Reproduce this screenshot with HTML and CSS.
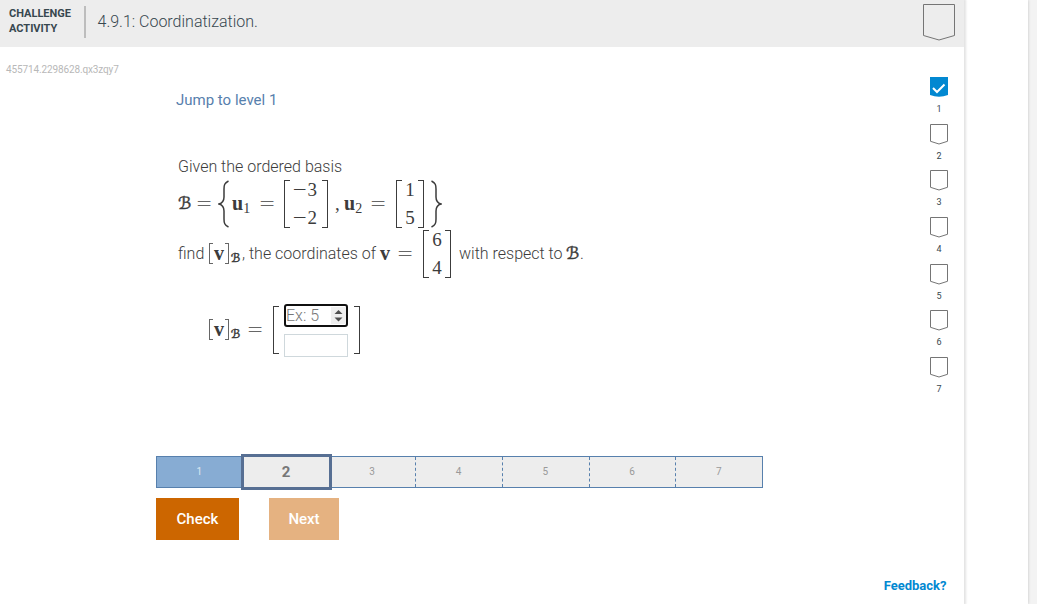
FILE: index.html
```html
<!DOCTYPE html>
<html lang="en">
<head>
<meta charset="utf-8">
<title>4.9.1: Coordinatization.</title>
<link rel="stylesheet" href="styles.css">
</head>
<body>
<div class="page">
  <main class="card">
    <header class="header">
      <div class="kind">CHALLENGE<br>ACTIVITY</div>
      <h1 class="title">4.9.1: Coordinatization.</h1>
      <svg class="header-badge" width="34" height="38" viewBox="0 0 34 38"><path d="M1.5 1.5H32.5V32.5L17 37L1.5 32.5Z"/></svg>
    </header>
    <div class="body">
      <section class="content">
        <div class="code">455714.2298628.qx3zqy7</div>
        <a class="jump">Jump to level 1</a>
        <div class="question">
          <p class="given">Given the ordered basis</p>
          <div class="math row-basis">
            <span class="cal">ℬ</span><span class="eq eq-a">=</span>
            <svg class="brace brace-l" width="12" height="48" viewBox="0 0 12 48"><path d="M10.5 1C6.5 3 6 5 6 9V17C6 21 4.500 23 1 24C4.500 25 6 27 6 31V39C6 43 6.500 45 10.500 47"/></svg>
            <span class="vec u">u<sub>1</sub></span><span class="eq eq-b">=</span>
            <span class="matrix wide"><span><i class="minus">−</i>3</span><span><i class="minus">−</i>2</span></span>
            <span class="comma">,</span>
            <span class="vec u">u<sub>2</sub></span><span class="eq eq-c">=</span>
            <span class="matrix narrow m-b"><span>1</span><span>5</span></span>
            <svg class="brace brace-r" width="12" height="48" viewBox="0 0 12 48"><path d="M1.500 1C5.500 3 6 5 6 9V17C6 21 7.500 23 11 24C7.500 25 6 27 6 31V39C6 43 5.500 45 1.500 47"/></svg>
          </div>
          <div class="math row-find">
            <span class="txt find">find</span>
            <span class="norm"><span class="vec">v</span></span><span class="cal cal-sub">ℬ</span>
            <span class="txt coords">, the coordinates of</span>
            <span class="vec v">v</span><span class="eq eq-d">=</span>
            <span class="matrix narrow m-c"><span>6</span><span>4</span></span>
            <span class="txt respect">with respect to</span>
            <span class="cal cal-end">ℬ</span><span class="txt">.</span>
          </div>
          <div class="math row-answer">
            <span class="norm norm-a"><span class="vec">v</span></span><span class="cal cal-sub">ℬ</span>
            <span class="eq eq-e">=</span>
            <span class="bracket bracket-l"></span>
            <div class="inputs">
              <div class="input focused"><span>Ex: 5</span>
                <i class="spin"><svg width="15" height="17" viewBox="0 0 15 17"><path d="M3.500 7L7.500 3L11.500 7ZM3.500 10.500L7.500 14.500L11.500 10.500Z"/></svg></i>
              </div>
              <div class="input"></div>
            </div>
            <span class="bracket bracket-r"></span>
          </div>
        </div>
        <div class="progress">
          <div class="step done">1</div>
          <div class="step current">2</div>
          <div class="step">3</div>
          <div class="step">4</div>
          <div class="step">5</div>
          <div class="step">6</div>
          <div class="step">7</div>
        </div>
        <div class="buttons">
          <button class="btn check">Check</button>
          <button class="btn next">Next</button>
        </div>
      </section>
      <aside class="levels">
        <div class="level on"><svg width="20" height="22" viewBox="0 0 20 22"><path class="fill" d="M1 1H19V19Q10 22.500 1 19Z"/><path class="tick" d="M4 12L8 16L15.500 8.500"/></svg><span>1</span></div>
        <div class="level"><svg width="20" height="22" viewBox="0 0 20 22"><path d="M1.500 1.500H18.500V18.300L10 21L1.500 18.300Z"/></svg><span>2</span></div>
        <div class="level"><svg width="20" height="22" viewBox="0 0 20 22"><path d="M1.500 1.500H18.500V18.300L10 21L1.500 18.300Z"/></svg><span>3</span></div>
        <div class="level"><svg width="20" height="22" viewBox="0 0 20 22"><path d="M1.500 1.500H18.500V18.300L10 21L1.500 18.300Z"/></svg><span>4</span></div>
        <div class="level"><svg width="20" height="22" viewBox="0 0 20 22"><path d="M1.500 1.500H18.500V18.300L10 21L1.500 18.300Z"/></svg><span>5</span></div>
        <div class="level"><svg width="20" height="22" viewBox="0 0 20 22"><path d="M1.500 1.500H18.500V18.300L10 21L1.500 18.300Z"/></svg><span>6</span></div>
        <div class="level"><svg width="20" height="22" viewBox="0 0 20 22"><path d="M1.500 1.500H18.500V18.300L10 21L1.500 18.300Z"/></svg><span>7</span></div>
      </aside>
    </div>
    <footer class="footer"><a class="feedback">Feedback?</a></footer>
  </main>
</div>
</body>
</html>
```
FILE: styles.css
```css
*, *::before, *::after { box-sizing: border-box; }
body {
  margin: 0;
  height: 604px;
  overflow: hidden;
  background: #f3f3f3;
  font-family: Roboto, sans-serif;
  color: #37474f;
}
.page {
  width: 1028px;
  height: 604px;
  background: #fff;
  box-shadow: 0 0 3px rgba(0, 0, 0, .2);
}
.card {
  width: 964px;
  height: 604px;
  display: flex;
  flex-direction: column;
  background: #fff;
  box-shadow: 1px 0 2px 1px rgba(0, 0, 0, .11);
}
.header {
  flex: none;
  display: flex;
  align-items: flex-start;
  height: 47px;
  padding-left: 9px;
  background: #ededed;
}
.kind {
  width: 77px;
  height: 32px;
  margin-top: 6px;
  border-right: 2px solid #bdbdbd;
  font-size: 11px;
  font-weight: 700;
  line-height: 15px;
}
.title {
  margin: 12px 0 0 11.500px;
  font-size: 16px;
  font-weight: 300;
  line-height: 20px;
}
svg path { fill: none; stroke: #757575; }
.header-badge { margin: 3px 8px 0 auto; }
.body { display: flex; flex: 1; }
.content { flex: 1; display: flex; flex-direction: column; }
.code {
  margin: 16px 0 0 6px;
  color: #b8b8b8;
  font: 10px/14px Roboto, sans-serif;
  letter-spacing: -.13px;
}
.jump {
  margin: 13px 0 0 176px;
  color: #5780ad;
  font-size: 15px;
  line-height: 20px;
}
.question { margin-left: 178px; color: #3c3c3c; }
.given {
  margin: 47px 0 0;
  font-size: 16px;
  font-weight: 300;
  line-height: 20px;
}
.math {
  display: flex;
  align-items: center;
  height: 48px;
  white-space: nowrap;
  font: 19px/22px "Liberation Serif", serif;
}
.row-basis { margin-top: 3px; }
.row-find { margin-top: 2px; }
.row-answer { margin-top: 25px; height: 54px; padding-left: 31px; }
.txt { font: 300 16px/20px Roboto, sans-serif; }
.cal {
  width: 15px;
  font: italic 17px/20px "DejaVu Sans", sans-serif;
  -webkit-text-stroke: .5px currentColor;
  margin-top: -2px;
}
.eq { width: 14px; text-align: center; transform: scaleX(1.42); color: #666; }
.eq-a { margin-left: 4px; }
.eq-b { margin-left: 6px; }
.eq-c { margin-left: 5px; }
.eq-d { margin-left: 7px; }
.eq-e { margin-left: 6px; }
.vec { font-weight: 700; font-size: 20px; margin-top: -2px; }
.u { width: 22px; }
.u sub { font-size: 14px; font-weight: 400; line-height: 0; vertical-align: -3px; }
.brace { flex: none; }
.brace path { stroke: #3c3c3c; stroke-width: 1.500; }
.brace-l { margin: 0 2px 0 7px; }
.brace-r { margin-left: 6px; }
.matrix {
  display: flex;
  flex-direction: column;
  justify-content: space-between;
  height: 48px;
  line-height: 20px;
  text-align: center;
  position: relative;
}
.matrix::before, .matrix::after, .bracket {
  content: "";
  width: 6px;
  height: 48px;
  border: 1px solid #3c3c3c;
}
.matrix::before { position: absolute; left: 0; border-right: 0; }
.matrix::after { position: absolute; right: 0; border-left: 0; }
.minus {
  display: inline-block;
  font-style: normal;
  transform: scaleX(1.3);
  transform-origin: right;
  margin-right: 1px;
}
.wide { width: 44px; margin-left: 10px; }
.wide > span { padding-left: 2px; padding-right: 1px; }
.narrow { width: 28px; }
.m-b { margin-left: 11px; }
.m-c { margin-left: 11px; }
.comma { width: 16px; padding-left: 7px; }
.find { width: 31px; }
.norm {
  width: 20px;
  height: 22px;
  display: flex;
  align-items: center;
  justify-content: center;
  position: relative;
}
.norm::before, .norm::after {
  content: "";
  position: absolute;
  top: 0;
  width: 4px;
  height: 21px;
  border: 1px solid #666;
}
.norm::before { left: 0; border-right: 0; }
.norm::after { right: 0; border-left: 0; }
.cal-sub { width: 11px; margin: 0 0 0 2px; font-size: 12px; padding-top: 7px; }
.coords { width: 138px; }
.v { width: 11px; }
.respect { margin-left: 8px; width: 107px; }
.cal-end { width: 14px; }
.bracket-l { margin-left: 11px; border-right: 0; }
.bracket-r { margin-left: 6px; border-left: 0; }
.inputs { display: flex; flex-direction: column; gap: 7px; margin-left: 5px; }
.input {
  width: 64px;
  height: 23px;
  border: 1px solid #cfd8dc;
  background: #fff;
}
.focused {
  display: flex;
  border: 2px solid #101010;
  border-radius: 3px;
  color: #777;
  font: 300 16px/19px Roboto, sans-serif;
}
.spin { margin: 1px 0 1px auto; width: 15px; height: 17px; background: #efefef; }
.spin svg { display: block; }
.spin path { fill: #505050; stroke: none; }
.progress {
  display: flex;
  width: 607px;
  height: 32px;
  margin: 99px 0 0 156px;
  border: 1px solid #5780ad;
  background: #ededed;
}
.step {
  flex: 1 1 0;
  display: flex;
  align-items: center;
  justify-content: center;
  border-right: 1px dashed #5780ad;
  padding: 0 1px 1px 0;
  color: #999;
  font-size: 10px;
}
.step:last-child { border-right: 0; }
.done { background: #87acd3; border-right: 0; color: #dce7f2; }
.current {
  flex: 0 0 91px;
  margin: -3px -2px -3px -2px;
  border: 3px solid #576f93;
  background: #ededed;
  padding: 0;
  color: #777;
  font-size: 15px;
  font-weight: 700;
  z-index: 1;
}
.step.current { border-right: 3px solid #576f93; padding: 0; }
.buttons { display: flex; gap: 30px; margin: 10px 0 0 156px; }
.btn {
  height: 42px;
  padding: 0;
  border: 0;
  color: #fff;
  font: 500 15px Roboto, sans-serif;
}
.check { width: 83px; background: #cc6600; }
.next { width: 70px; background: #e5b281; }
.levels { width: 36px; padding-top: 29px; margin-right: 7px; }
.level {
  display: flex;
  flex-direction: column;
  align-items: center;
  width: 36px;
  height: 46.700px;
}
.level svg { flex: none; }
.level span { margin-top: 5px; font-size: 9px; line-height: 12px; }
.level .fill { fill: #0288d1; stroke: none; }
.level .tick { stroke: #fff; stroke-width: 2; }
.footer { flex: none; height: 29px; text-align: right; padding-right: 17.500px; }
.feedback { color: #0288d1; font-size: 13px; font-weight: 700; line-height: 20px; }
```
